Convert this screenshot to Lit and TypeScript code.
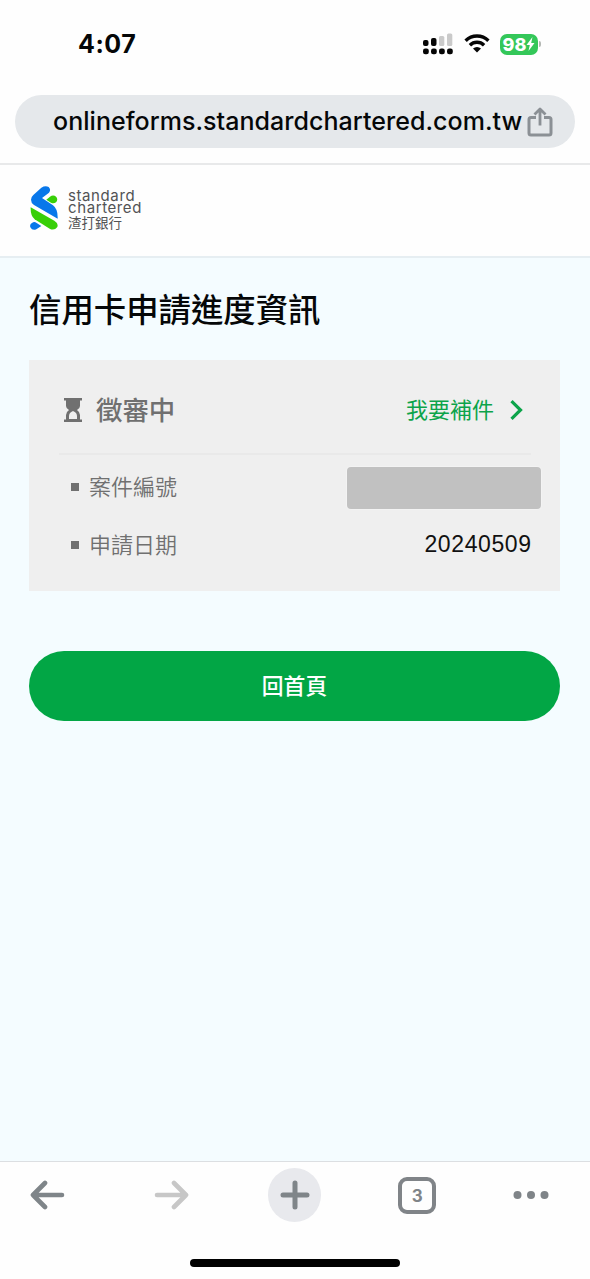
import { LitElement, html, css } from "lit";
import { customElement } from "lit/decorators.js";

@customElement("app-root")
export class AppRoot extends LitElement {
  static styles = css`
    :host {
      display: flex;
      flex-direction: column;
      width: 590px;
      height: 1279px;
      overflow: hidden;
      background: #fefefe;
      color: #050708;
      font-family: Inter, "Noto Sans CJK TC", sans-serif;
    }
    * { box-sizing: border-box; }
    svg { display: block; flex: none; }
    .status {
      height: 95px;
      flex: none;
      display: flex;
      justify-content: space-between;
      padding: 28px 49px 0 78px;
    }
    .time {
      font-size: 25px;
      line-height: 32px;
      font-weight: 700;
      letter-spacing: 0.5px;
    }
    .signals { display: flex; gap: 11px; padding-top: 4px; height: 26px; }
    .battery { display: flex; align-items: center; height: 24px; margin-left: -1px; }
    .cell {
      display: flex;
      align-items: center;
      justify-content: center;
      width: 38px;
      height: 21px;
      border-radius: 7px;
      background: #34c759;
      color: #fff;
      font-weight: 800;
      font-size: 18px;
      line-height: 21px;
    }
    .nub { width: 2px; height: 6px; margin-left: 1px; border-radius: 0 2px 2px 0; background: #b4b8b4; }
    .address {
      height: 70px;
      flex: none;
      padding: 0 15px;
      border-bottom: 2px solid #e8e9ea;
    }
    .pill {
      display: flex;
      align-items: center;
      height: 53px;
      border-radius: 27px;
      background: #e5e8eb;
      padding-left: 38px;
    }
    .url {
      width: 474px;
      font-size: 25px;
      line-height: 50px;
      margin-bottom: 2px;
      font-weight: 500;
      white-space: nowrap;
      letter-spacing: 0.04px;
    }
    .brand {
      height: 93px;
      flex: none;
      display: flex;
      padding: 21px 30px 0;
      border-bottom: 2px solid #e6eef2;
    }
    .name { margin-left: 10px; padding-top: 4px; color: #525355; }
    .latin {
      font-family: Inter, sans-serif;
      font-weight: 400;
      font-size: 15px;
      line-height: 12.4px;
      letter-spacing: 0.6px;
    }
    .han { font-size: 13.5px; line-height: 17px; font-weight: 400; }
    .page {
      flex: 1;
      background: #f4fcff;
      padding: 32px 30px 0 29px;
    }
    h1 {
      margin: 0;
      font-size: 32.4px;
      line-height: 42px;
      font-weight: 500;
      white-space: nowrap;
    }
    .card {
      margin-top: 28px;
      height: 231px;
      background: #efefef;
      padding: 0 29px 0 30px;
      color: #707070;
    }
    .head {
      display: flex;
      align-items: center;
      height: 95px;
      padding: 7px 8px 0 5px;
      border-bottom: 2px solid #e9e9e9;
    }
    .state { margin-left: 14px; font-size: 26.4px; font-weight: 500; line-height: 36px; }
    .link { margin-left: auto; margin-right: 16px; color: #0ca44a; font-size: 22px; line-height: 32px; }
    .row { display: flex; align-items: center; height: 51px; padding-left: 12px; }
    .row.first { height: 64px; }
    .bullet { width: 8px; height: 8px; margin-right: 10px; background: #707070; }
    .label { font-size: 22px; line-height: 30px; font-weight: 350; }
    .mask {
      width: 194px;
      height: 42px;
      margin: 2px -10px 0 auto;
      border-radius: 4px;
      background: #c1c1c1;
      box-shadow: 0 0 1px 1px #f3f3f3;
    }
    .date {
      margin-left: auto;
      color: #111;
      font-family: "Liberation Sans", sans-serif;
      font-size: 23px;
      letter-spacing: 0.6px;
      margin-right: -0.6px;
    }
    .home {
      display: block;
      width: 531px;
      height: 70px;
      margin-top: 60px;
      padding: 0;
      border: 0;
      border-radius: 35px;
      background: #02a645;
      color: #fff;
      font: 500 21.8px/70px Inter, "Noto Sans CJK TC", sans-serif;
    }
    .tools {
      height: 118px;
      flex: none;
      border-top: 1px solid #dcdfe2;
      background: #fefefe;
    }
    .icons { display: flex; align-items: center; height: 66px; padding: 0 41px 0 30px; }
    .back { margin-right: 89px; }
    .fwd { margin-right: 79px; }
    .plus {
      display: flex;
      align-items: center;
      justify-content: center;
      width: 54px;
      height: 54px;
      border-radius: 50%;
      background: #e8e9ed;
      margin-right: 77px;
    }
    .tabs {
      width: 38px;
      height: 37px;
      border: 4px solid #808488;
      border-radius: 9px;
      color: #808488;
      font-size: 17px;
      font-weight: 700;
      line-height: 30px;
      text-align: center;
      margin-right: 77px;
    }
    .bar { width: 210px; height: 8px; border-radius: 4px; background: #000; margin: 31px auto 0; }
  `;

  render() {
    return html`
      <div class="status">
        <div class="time">4:07</div>
        <div class="signals">
          <svg width="30" height="24" viewBox="0 0 30 24">
            <g fill="#050505">
              <rect x="0" y="8" width="5.500" height="6" rx="2" /><rect x="8" y="6" width="5.500" height="8" rx="2" />
              <rect x="0" y="16.500" width="5.800" height="5.800" rx="2.200" /><rect x="8" y="16.500" width="5.800" height="5.800" rx="2.200" />
              <rect x="16" y="16.500" width="5.800" height="5.800" rx="2.200" /><rect x="24" y="16.500" width="5.800" height="5.800" rx="2.200" />
            </g>
            <rect x="16" y="4" width="5.300" height="10" rx="1.500" fill="#cacaca" />
            <rect x="24" y="1.500" width="5.300" height="12.500" rx="1.500" fill="#cacaca" />
          </svg>
          <svg width="26" height="24" viewBox="0 0 26 24">
            <g fill="none" stroke="#050505" stroke-width="3.400">
              <path d="M1.600 8.700a16.300 16.300 0 0 1 22.800 0" />
              <path d="M5.900 13.200a10.200 10.200 0 0 1 14.200 0" />
            </g>
            <path fill="#050505" d="M9 16.500a6 6 0 0 1 8 0L13 20.600z" />
          </svg>
          <div class="battery">
            <div class="cell">98<svg width="9" height="14" viewBox="0 0 8 14"><path fill="#fff" d="M6 0 0 8h3.300L2 14l6-8H4.700z" /></svg></div>
            <div class="nub"></div>
          </div>
        </div>
      </div>

      <div class="address">
        <div class="pill">
          <div class="url">onlineforms.standardchartered.com.tw</div>
          <svg width="26" height="30" viewBox="0 0 26 30" fill="none" stroke="#8b9095" stroke-width="3" stroke-linejoin="round">
            <path d="M9 10.500H4Q2 10.500 2 12.500V26Q2 28 4 28H22Q24 28 24 26V12.500Q24 10.500 22 10.500H17" />
            <path d="M13 18.500V2M7.500 7.500 13 2 18.500 7.500" stroke-width="2.800" />
          </svg>
        </div>
      </div>

      <header class="brand">
        <svg width="28" height="44" viewBox="30 33 84 132">
          <path fill="#0877ea" d="M64 38Q76 31 86 36Q94 45 87 53L66 69L99 91Q114 102 113 131L42 90Q33 84 33 74Q33 66 40 60Z" />
          <path fill="#38cf08" d="M79 74L90 65Q100 58 109 66Q115 74 108 82Q101 87 93 83Z" />
          <path fill="#38cf08" d="M32 97L103 137Q116 145 112 156Q103 168 89 161L44 133Q31 123 32 97Z" />
          <path fill="#0877ea" d="M64 153L49 163Q37 168 31 157Q28 147 37 143Q43 139 50 144Z" />
        </svg>
        <div class="name">
          <div class="latin">standard</div>
          <div class="latin">chartered</div>
          <div class="han">渣打銀行</div>
        </div>
      </header>

      <main class="page">
        <h1>信用卡申請進度資訊</h1>
        <section class="card">
          <div class="head">
            <svg width="18" height="24" viewBox="0 0 18 24" fill="#707070">
              <path d="M0 0H18V2.500H16V8Q16 10.500 13 12Q16 14 16 17V21.500H18V24H0V21.500H2V17Q2 14 5 12Q2 10.500 2 8V2.500H0Z" />
              <path fill="#efefef" d="M9 13Q13 14.500 13 18V21H5V18Q5 14.500 9 13Z" />
            </svg>
            <div class="state">徵審中</div>
            <div class="link">我要補件</div>
            <svg width="13" height="20" viewBox="0 0 13 20" fill="none" stroke="#0ca44a" stroke-width="3.200"><path d="M1.500 1.200 10.500 10 1.500 18.800" /></svg>
          </div>
          <div class="row first"><i class="bullet"></i><span class="label">案件編號</span><div class="mask"></div></div>
          <div class="row"><i class="bullet"></i><span class="label">申請日期</span><span class="date">20240509</span></div>
        </section>
        <button class="home">回首頁</button>
      </main>

      <nav class="tools">
        <div class="icons">
          <svg class="back" width="35" height="30" viewBox="0 0 35 30" fill="none" stroke="#7f8589" stroke-width="4.600" stroke-linecap="round" stroke-linejoin="round"><path d="M32 15H3M15 3 3 15 15 27" /></svg>
          <svg class="fwd" width="35" height="30" viewBox="0 0 35 30" fill="none" stroke="#c7c7c7" stroke-width="4.600" stroke-linecap="round" stroke-linejoin="round"><path d="M3 15H32M20 3 32 15 20 27" /></svg>
          <div class="plus"><svg width="30" height="30" viewBox="0 0 30 30" stroke="#7f8589" stroke-width="5" stroke-linecap="round"><path d="M15 3V27M3 15H27" /></svg></div>
          <div class="tabs">3</div>
          <svg width="36" height="10" viewBox="0 0 36 10" fill="#7f8488"><circle cx="4.500" cy="5" r="4" /><circle cx="18" cy="5" r="4" /><circle cx="31.500" cy="5" r="4" /></svg>
        </div>
        <div class="bar"></div>
      </nav>
    `;
  }
}
